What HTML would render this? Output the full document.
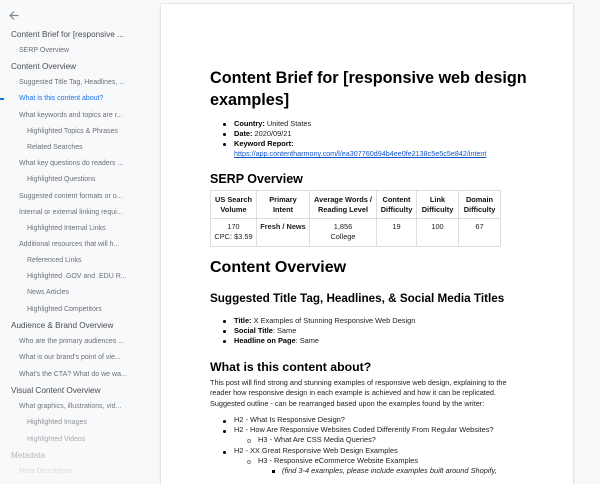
<!DOCTYPE html>
<html><head><meta charset="utf-8"><style>
*{margin:0;padding:0;box-sizing:border-box}
body{width:600px;height:477px;overflow:hidden;background:#f8f9fa;font-family:"Liberation Sans",Arial,sans-serif;position:relative}
.s{position:absolute;white-space:nowrap;color:#6b6f74;font-size:7px;line-height:10px}
.l1{left:11px;font-size:8.2px;color:#4a4e52}
.l2{left:19px}
.l3{left:27px}
.card{position:absolute;left:161px;top:4px;width:412px;height:480px;background:#fff;box-shadow:0 0 2px rgba(0,0,0,.15),0 1px 3px rgba(0,0,0,.1)}
.t{position:absolute;white-space:nowrap;color:#000}
.b{font-size:7.4px;line-height:10px;color:#222}
.b b{color:#000}
.dot{position:absolute;width:3px;height:3px;border-radius:50%;background:#000}
.circ{position:absolute;width:4px;height:4px;border-radius:50%;border:0.7px solid #888}
.sq{position:absolute;width:3px;height:3px;background:#000}
.fade{position:absolute;left:0;top:400px;width:160px;height:77px;background:linear-gradient(rgba(248,249,250,0),rgba(248,249,250,.85))}
table{position:absolute;left:210px;top:190px;border-collapse:collapse;font-size:7.4px;line-height:10px;color:#222}
td{border:1px solid #ddd;text-align:center;vertical-align:top;padding:3px 2px}
th{border:1px solid #ddd;font-weight:bold;padding:3px 2px;height:28px;vertical-align:middle;color:#111}
</style></head><body>
<svg style="position:absolute;left:8px;top:10px" width="12" height="11" viewBox="0 0 12 11"><path d="M10.5 5.5H2M6 1.5L2 5.5 6 9.5" fill="none" stroke="#80868b" stroke-width="1.2"/></svg>
<div class="s l1" style="top:30px">Content Brief for [responsive ...</div>
<div class="s l2" style="top:46px">SERP Overview</div>
<div class="s l1" style="top:62px">Content Overview</div>
<div class="s l2" style="top:78px">Suggested Title Tag, Headlines, ...</div>
<div class="s l2" style="top:94px;color:#1a73e8">What is this content about?</div>
<div style="position:absolute;left:0;top:98px;width:4px;height:1.5px;background:#1a73e8"></div>
<div class="s l2" style="top:111px">What keywords and topics are r...</div>
<div class="s l3" style="top:127px">Highlighted Topics &amp; Phrases</div>
<div class="s l3" style="top:143px">Related Searches</div>
<div class="s l2" style="top:159px">What key questions do readers ...</div>
<div class="s l3" style="top:175px">Highlighted Questions</div>
<div class="s l2" style="top:192px">Suggested content formats or o...</div>
<div class="s l2" style="top:208px">Internal or external linking requi...</div>
<div class="s l3" style="top:224px">Highlighted Internal Links</div>
<div class="s l2" style="top:240px">Additional resources that will h...</div>
<div class="s l3" style="top:256px">Referenced Links</div>
<div class="s l3" style="top:272px">Highlighted .GOV and .EDU R...</div>
<div class="s l3" style="top:288px">News Articles</div>
<div class="s l3" style="top:305px">Highlighted Competitors</div>
<div class="s l1" style="top:321px">Audience &amp; Brand Overview</div>
<div class="s l2" style="top:337px">Who are the primary audiences ...</div>
<div class="s l2" style="top:353px">What is our brand's point of vie...</div>
<div class="s l2" style="top:370px">What's the CTA? What do we wa...</div>
<div class="s l1" style="top:386px">Visual Content Overview</div>
<div class="s l2" style="top:402px">What graphics, illustrations, vid...</div>
<div class="s l3" style="top:418px">Highlighted Images</div>
<div class="s l3" style="top:435px">Highlighted Videos</div>
<div class="s l1" style="top:451px">Metadata</div>
<div class="s l2" style="top:467px">Meta Description</div>
<div class="fade"></div>

<div class="card"></div>
<div class="t" style="left:210px;top:67px;font-size:16.2px;font-weight:bold;line-height:22px">Content Brief for [responsive web design<br>examples]</div>
<div class="dot" style="left:223px;top:123px"></div><div class="t b" style="left:234px;top:119px"><b>Country:</b> United States</div>
<div class="dot" style="left:223px;top:133px"></div><div class="t b" style="left:234px;top:129px"><b>Date:</b> 2020/09/21</div>
<div class="dot" style="left:223px;top:143px"></div><div class="t b" style="left:234px;top:139px"><b>Keyword Report:</b></div>
<div class="t b" style="left:234px;top:149px;color:#1155cc;text-decoration:underline;font-size:7.2px">https://app.contentharmony.com/l/ea307760d94b4ee0fe2138c5e5c5e842/intent</div>
<div class="t" style="left:210px;top:172px;font-size:12.5px;font-weight:bold">SERP Overview</div>
<table>
<tr><th style="width:46px">US Search Volume</th><th style="width:53px">Primary Intent</th><th style="width:67px">Average Words / Reading Level</th><th style="width:40px">Content Difficulty</th><th style="width:42px">Link Difficulty</th><th style="width:42px">Domain Difficulty</th></tr>
<tr><td style="height:28px">170<br>CPC: $3.59</td><td style="font-weight:bold">Fresh / News</td><td>1,856<br>College</td><td>19</td><td>100</td><td>67</td></tr>
</table>
<div class="t" style="left:210px;top:259px;font-size:16px;font-weight:bold">Content Overview</div>
<div class="t" style="left:210px;top:292px;font-size:11.7px;font-weight:bold">Suggested Title Tag, Headlines, &amp; Social Media Titles</div>
<div class="dot" style="left:223px;top:320px"></div><div class="t b" style="left:234px;top:316px"><b>Title:</b> X Examples of Stunning Responsive Web Design</div>
<div class="dot" style="left:223px;top:330px"></div><div class="t b" style="left:234px;top:326px"><b>Social Title</b>: Same</div>
<div class="dot" style="left:223px;top:340px"></div><div class="t b" style="left:234px;top:336px"><b>Headline on Page</b>: Same</div>
<div class="t" style="left:210px;top:360px;font-size:12.3px;font-weight:bold">What is this content about?</div>
<div class="t b" style="left:210px;top:378px;line-height:10.4px;font-size:7.3px">This post will find strong and stunning examples of responsive web design, explaining to the<br>reader how responsive design in each example is achieved and how it can be replicated.<br>Suggested outline - can be rearranged based upon the examples found by the writer:</div>
<div class="dot" style="left:223px;top:420px"></div><div class="t b" style="left:234px;top:415px">H2 - What Is Responsive Design?</div>
<div class="dot" style="left:223px;top:430px"></div><div class="t b" style="left:234px;top:425px">H2 - How Are Responsive Websites Coded Differently From Regular Websites?</div>
<div class="circ" style="left:247px;top:439px"></div><div class="t b" style="left:258px;top:435px">H3 - What Are CSS Media Queries?</div>
<div class="dot" style="left:223px;top:451px"></div><div class="t b" style="left:234px;top:446px">H2 - XX Great Responsive Web Design Examples</div>
<div class="circ" style="left:247px;top:460px"></div><div class="t b" style="left:258px;top:456px">H3 - Responsive eCommerce Website Examples</div>
<div class="sq" style="left:272px;top:470px"></div><div class="t b" style="left:282px;top:466px;font-style:italic">(find 3-4 examples, please include examples built around Shopify,</div>
</body></html>
